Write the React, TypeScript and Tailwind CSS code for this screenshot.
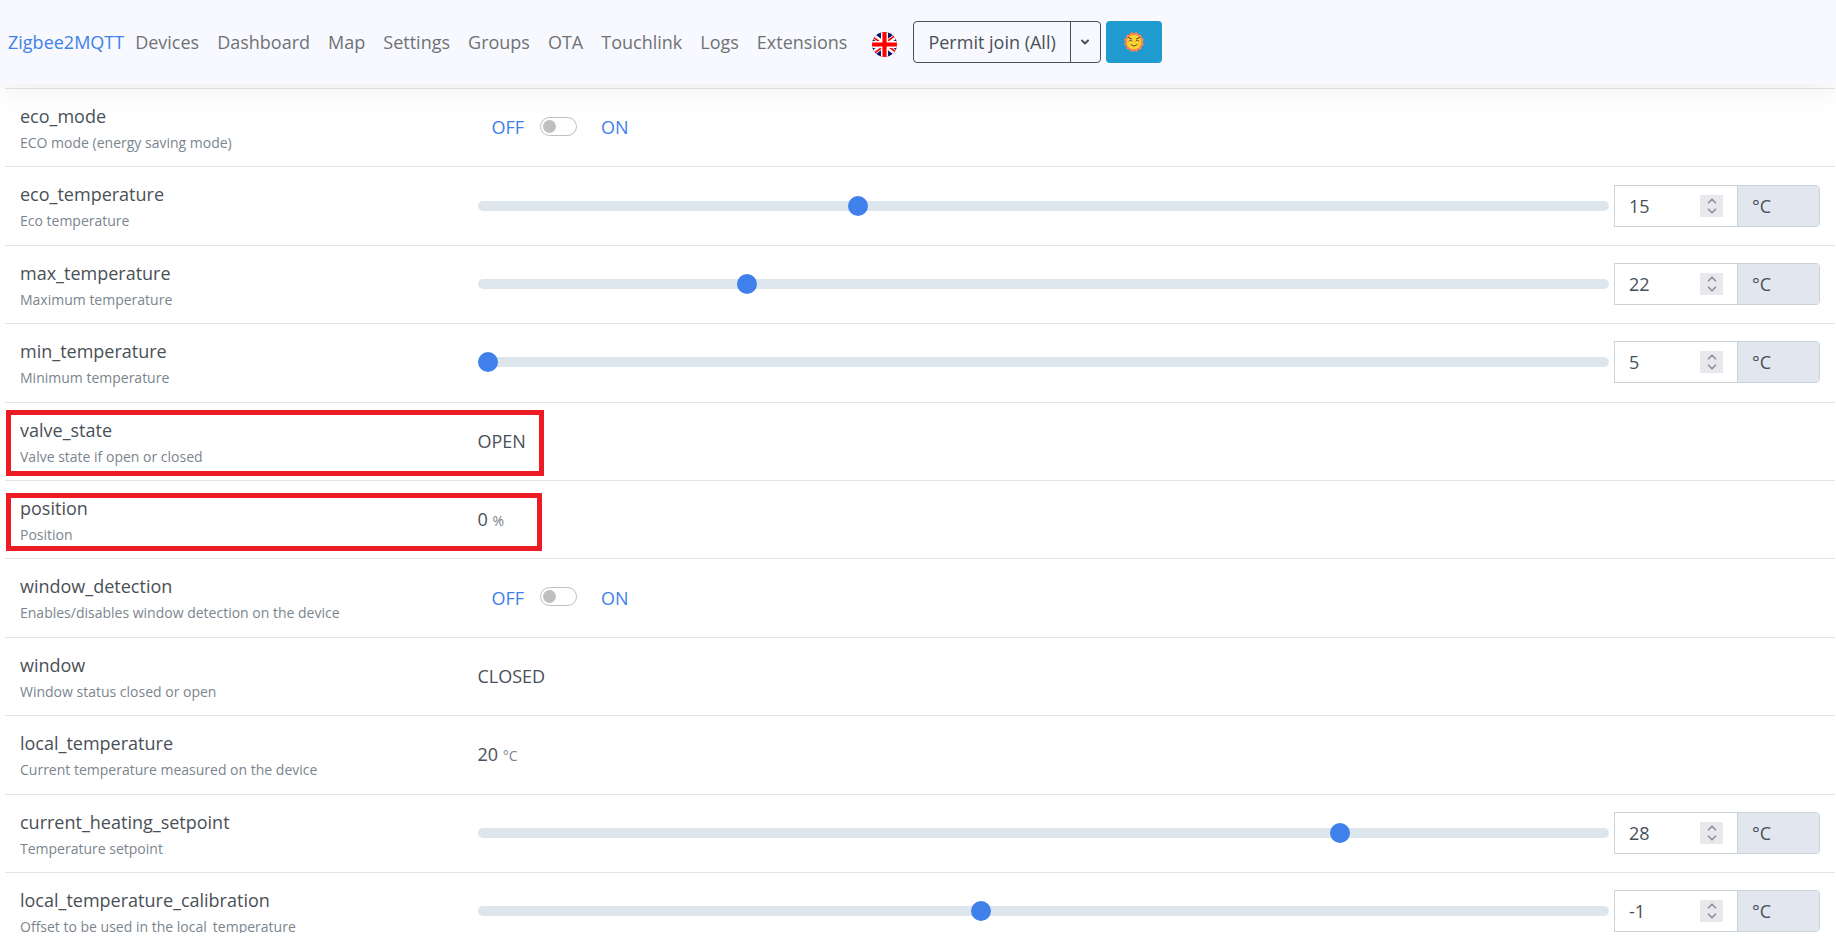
import { useState } from "react";
import { ChevronDown, ChevronUp } from "lucide-react";

interface Feature {
  name: string;
  description: string;
  type: "switch" | "range" | "text";
  value?: string | number;
  min?: number;
  max?: number;
  unit?: string;
  mark?: string;
}

const links = ["Devices", "Dashboard", "Map", "Settings", "Groups", "OTA", "Touchlink", "Logs", "Extensions"];

const features: Feature[] = [
  { name: "eco_mode", description: "ECO mode (energy saving mode)", type: "switch" },
  { name: "eco_temperature", description: "Eco temperature", type: "range", value: 15, min: 5, max: 35, unit: "°C" },
  { name: "max_temperature", description: "Maximum temperature", type: "range", value: 22, min: 15, max: 45, unit: "°C" },
  { name: "min_temperature", description: "Minimum temperature", type: "range", value: 5, min: 5, max: 15, unit: "°C" },
  { name: "valve_state", description: "Valve state if open or closed", type: "text", value: "OPEN", mark: "top-[7px] h-[66px] w-[538px]" },
  { name: "position", description: "Position", type: "text", value: 0, unit: "%", mark: "top-3 h-[58px] w-[536px]" },
  { name: "window_detection", description: "Enables/disables window detection on the device", type: "switch" },
  { name: "window", description: "Window status closed or open", type: "text", value: "CLOSED" },
  { name: "local_temperature", description: "Current temperature measured on the device", type: "text", value: 20, unit: "°C" },
  { name: "current_heating_setpoint", description: "Temperature setpoint", type: "range", value: 28, min: 5, max: 35, unit: "°C" },
  { name: "local_temperature_calibration", description: "Offset to be used in the local_temperature", type: "range", value: -1, min: -9, max: 9, unit: "°C" },
];

const FlagIcon = () => (
  <svg viewBox="0 0 60 60" className="size-[25px]" aria-hidden="true">
    <clipPath id="flag-circle">
      <circle cx="30" cy="30" r="30" />
    </clipPath>
    <clipPath id="flag-red">
      <path d="M30 30h44v33zM30 30v33H-14zM30 30H-14V-3zM30 30V-3h44z" />
    </clipPath>
    <g clipPath="url(#flag-circle)">
      <path d="M0 0h60v60H0z" fill="#0a1560" />
      <path d="M-14 -3L74 63M74 -3L-14 63" stroke="#fff" strokeWidth="12" />
      <path d="M-14 -3L74 63M74 -3L-14 63" stroke="#f00" strokeWidth="8" clipPath="url(#flag-red)" />
      <path d="M30 0v60M0 30h60" stroke="#fff" strokeWidth="17" />
      <path d="M30 0v60M0 30h60" stroke="#f00" strokeWidth="10" />
    </g>
  </svg>
);

const SunIcon = () => (
  <svg viewBox="0 0 40 40" className="size-5" aria-hidden="true">
    <g fill="#ff8350">
      <rect x="5" y="5" width="30" height="30" rx="3" />
      <rect x="5" y="5" width="30" height="30" rx="3" transform="rotate(30 20 20)" />
      <rect x="5" y="5" width="30" height="30" rx="3" transform="rotate(60 20 20)" />
    </g>
    <circle cx="20" cy="20" r="14.5" fill="#ffd32e" />
    <g fill="none" stroke="#4a3540" strokeWidth="2" strokeLinecap="round" strokeLinejoin="round">
      <path d="M9 11l6 3M31 11l-6 3" />
      <path d="M10 18c1-2 5-2 6 0M24 18c1-2 5-2 6 0" />
      <path d="M14 25c3 4 9 4 12 0" />
    </g>
  </svg>
);

const Navbar = () => (
  <nav className="relative z-10 flex h-[84px] shrink-0 items-center bg-[#f8f9fe] pl-2 pb-px shadow-[0_4px_32px_rgba(0,0,0,0.08)]">
    <a href="#" className="pr-0.5 text-[#4080ea]">Zigbee2MQTT</a>
    <ul className="flex">
      {links.map((link) => (
        <li key={link}>
          <a href="#" className="block px-[9px] text-[#6f7275]">{link}</a>
        </li>
      ))}
    </ul>
    <button type="button" aria-label="Language" className="mx-4 mt-1.5">
      <FlagIcon />
    </button>
    <div className="flex h-[42px] rounded border border-[#495057]">
      <button type="button" className="px-3.5">Permit join (All)</button>
      <button type="button" aria-label="Select device" className="flex w-[30px] items-center justify-center border-l border-[#495057]">
        <ChevronDown className="size-3" strokeWidth={4} />
      </button>
    </div>
    <button type="button" aria-label="Theme" className="ml-[5px] flex h-[42px] w-14 items-center justify-center rounded bg-[#209bd0]">
      <SunIcon />
    </button>
  </nav>
);

const Toggle = ({ name }: { name: string }) => {
  const [on, setOn] = useState(false);

  return (
    <div className="flex items-center">
      <button type="button" onClick={() => setOn(false)} className="pr-4 pl-3.5 text-[#4080ea]">OFF</button>
      <input
        type="checkbox"
        role="switch"
        aria-label={name}
        checked={on}
        onChange={(e) => setOn(e.target.checked)}
        className="mb-0.5 h-[19px] w-[37px] appearance-none rounded-full border border-[#bfbfbf] bg-white p-0.5 before:block before:size-[13px] before:rounded-full before:bg-[#bfbfbf] checked:before:ml-auto checked:before:bg-[#4080ea]"
      />
      <button type="button" onClick={() => setOn(true)} className="ml-2.5 px-3.5 text-[#4080ea]">ON</button>
    </div>
  );
};

const RangeEditor = ({ feature }: { feature: Feature }) => {
  const [value, setValue] = useState(Number(feature.value));
  const { name, min, max, unit } = feature;

  return (
    <div className="flex items-center gap-[5px]">
      <input
        type="range"
        aria-label={name}
        min={min}
        max={max}
        value={value}
        onChange={(e) => setValue(Number(e.target.value))}
        className="h-5 min-w-0 flex-1 appearance-none bg-transparent [&::-webkit-slider-runnable-track]:h-2.5 [&::-webkit-slider-runnable-track]:rounded-full [&::-webkit-slider-runnable-track]:bg-[#dee6ed] [&::-webkit-slider-thumb]:-mt-[5px] [&::-webkit-slider-thumb]:size-5 [&::-webkit-slider-thumb]:appearance-none [&::-webkit-slider-thumb]:rounded-full [&::-webkit-slider-thumb]:bg-[#4080ea]"
      />
      <div className="flex h-[42px] w-[206px] rounded-r border border-[#c9d1d9]">
        <div className="flex flex-1 items-center px-3.5">
          <input
            type="number"
            aria-label={`${name} value`}
            min={min}
            max={max}
            value={value}
            onChange={(e) => setValue(Number(e.target.value))}
            className="w-full min-w-0 flex-1 appearance-none bg-transparent outline-none [&::-webkit-inner-spin-button]:appearance-none"
          />
          <div className="flex h-[22px] w-[23px] flex-col items-center justify-center bg-[#e9e8ec] text-[#8f8f9d]">
            <button type="button" aria-label="Increase" onClick={() => setValue(value + 1)}>
              <ChevronUp className="h-2.5 w-3.5" strokeWidth={3} preserveAspectRatio="xMidYMid slice" />
            </button>
            <button type="button" aria-label="Decrease" onClick={() => setValue(value - 1)}>
              <ChevronDown className="h-2.5 w-3.5" strokeWidth={3} preserveAspectRatio="xMidYMid slice" />
            </button>
          </div>
        </div>
        <span className="flex w-[82px] items-center border-l border-[#c9d1d9] bg-[#e2e7ef] pl-3.5">{unit}</span>
      </div>
    </div>
  );
};

const FeatureRow = ({ feature }: { feature: Feature }) => (
  <div className="relative flex items-center border-t border-[#dee6ed] pt-[13px] pb-3">
    <div className="flex w-1/4 flex-col gap-0.5 px-[15px]">
      <div className="leading-7">{feature.name}</div>
      <div className="text-sm leading-[1.6] whitespace-nowrap text-[#7b858e]">{feature.description}</div>
    </div>
    <div className="-mt-2.5 -mb-2 w-3/4 px-[15px]">
      {feature.type === "switch" && <Toggle name={feature.name} />}
      {feature.type === "range" && <RangeEditor feature={feature} />}
      {feature.type === "text" && (
        <>
          {feature.value} {feature.unit && <small className="text-sm text-[#7b858e]">{feature.unit}</small>}
        </>
      )}
    </div>
    {feature.mark && <div className={`pointer-events-none absolute left-px border-5 border-[#ed1c24] ${feature.mark}`} />}
  </div>
);

const App: React.FC = () => {
  return (
    <div className="flex h-screen flex-col bg-white pb-[17px] font-['Open_Sans',sans-serif] text-lg text-[#495057]">
      <Navbar />
      <main className="min-h-0 flex-1 overflow-hidden pt-1 pr-px pl-[5px]">
        {features.map((feature) => (
          <FeatureRow key={feature.name} feature={feature} />
        ))}
      </main>
    </div>
  );
};

export default App;
